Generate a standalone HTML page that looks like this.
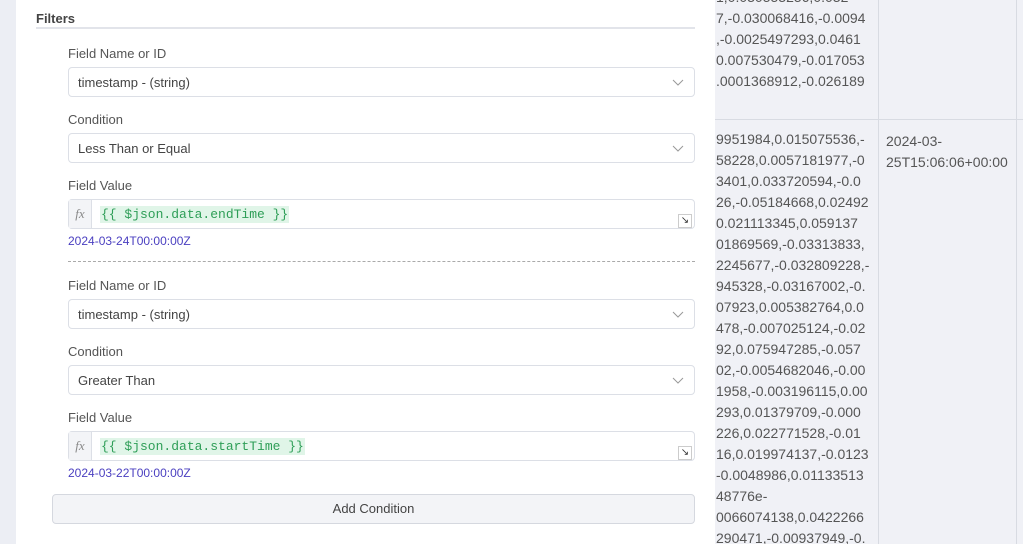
<!DOCTYPE html>
<html><head><meta charset="utf-8"><style>
*{box-sizing:border-box;margin:0;padding:0}
body{width:1023px;height:544px;overflow:hidden;background:#f0f1f6;font-family:"Liberation Sans",sans-serif;position:relative;color:#333}
.left{position:absolute;left:0;top:0;width:16px;height:544px;background:#eceef4}
.panel{position:absolute;left:16px;top:0;width:699px;height:544px;background:#fff}
.a{position:absolute}
.title{left:36px;top:11px;font-size:13px;font-weight:bold;color:#444}
.hr{left:36px;top:27px;width:659px;height:2px;background:#e2e4ea}
.lbl{left:68px;font-size:13px;color:#555}
.inp{left:68px;width:627px;height:30px;border:1px solid #dcdfe6;border-radius:4px;background:#fff;font-size:13px;color:#444;padding:7px 9px}
.chev{position:absolute;right:10px;top:8px}
.fx{left:68px;width:627px;height:30px;border:1px solid #dcdfe6;border-radius:4px;background:#fff}
.fx .f{position:absolute;left:0;top:0;width:23px;height:28px;background:#f3f4f7;border-right:1px solid #dcdfe6;font-family:"Liberation Serif",serif;font-style:italic;color:#888;font-size:13px;text-align:center;line-height:28px}
.fx .c{position:absolute;left:31px;top:6px;font-family:"Liberation Mono",monospace;font-size:13px;color:#2e9e57;background:#e0f5e8;padding:1px 1px}
.fx .r{position:absolute;right:2px;bottom:0;width:14px;height:14px;border:1px solid #ccc;background:#fff;font-size:10px;line-height:12px;text-align:center}
.hint{left:68px;font-size:12px;color:#4a3fc0}
.dash{left:68px;top:261px;width:627px;border-top:1px dashed #aaa}
.btn{left:52px;top:494px;width:643px;height:30px;border:1px solid #d5d8df;border-radius:4px;background:#f3f4f7;font-size:13px;text-align:center;line-height:28px;color:#444}
.tbl{position:absolute;left:716px;top:0;width:162px;height:544px;overflow:hidden}
.tbl div{position:absolute;left:0;white-space:nowrap;font-size:14px;color:#555}
.vl{position:absolute;top:0;width:1px;height:544px;background:#d8dbe2}
.hl{position:absolute;left:715px;width:308px;top:119px;height:1px;background:#d8dbe2}
</style></head><body>
<div class="left"></div>
<div class="tbl">
<div style="top:-11px">1,0.030553256,0.032</div>
<div style="top:10px">7,-0.030068416,-0.0094</div>
<div style="top:31px">,-0.0025497293,0.0461</div>
<div style="top:52px">0.007530479,-0.017053</div>
<div style="top:73px">.0001368912,-0.026189</div>
<div style="top:131px">9951984,0.015075536,-</div>
<div style="top:152px">58228,0.0057181977,-0</div>
<div style="top:173px">3401,0.033720594,-0.0</div>
<div style="top:194px">26,-0.05184668,0.02492</div>
<div style="top:215px">0.021113345,0.059137</div>
<div style="top:236px">01869569,-0.03313833,</div>
<div style="top:257px">2245677,-0.032809228,-</div>
<div style="top:278px">945328,-0.03167002,-0.</div>
<div style="top:299px">07923,0.005382764,0.0</div>
<div style="top:320px">478,-0.007025124,-0.02</div>
<div style="top:341px">92,0.075947285,-0.057</div>
<div style="top:362px">02,-0.0054682046,-0.00</div>
<div style="top:383px">1958,-0.003196115,0.00</div>
<div style="top:404px">293,0.01379709,-0.000</div>
<div style="top:425px">226,0.022771528,-0.01</div>
<div style="top:446px">16,0.019974137,-0.0123</div>
<div style="top:467px">-0.0048986,0.01133513</div>
<div style="top:488px">48776e-</div>
<div style="top:509px">0066074138,0.0422266</div>
<div style="top:530px">290471,-0.00937949,-0.</div>
</div>
<div class="vl" style="left:878px"></div>
<div class="vl" style="left:1016px"></div>
<div class="hl"></div>
<div class="a" style="left:886px;top:131px;font-size:14px;color:#555;line-height:21px">2024-03-<br>25T15:06:06+00:00</div>
<div class="panel"></div>
<div class="a title">Filters</div>
<div class="a hr"></div>

<div class="a lbl" style="top:46px">Field Name or ID</div>
<div class="a inp" style="top:67px">timestamp - (string)<svg class="chev" width="12" height="12" viewBox="0 0 12 12"><path d="M1 4l5 5 5-5" fill="none" stroke="#999" stroke-width="1"/></svg></div>
<div class="a lbl" style="top:112px">Condition</div>
<div class="a inp" style="top:133px">Less Than or Equal<svg class="chev" width="12" height="12" viewBox="0 0 12 12"><path d="M1 4l5 5 5-5" fill="none" stroke="#999" stroke-width="1"/></svg></div>
<div class="a lbl" style="top:178px">Field Value</div>
<div class="a fx" style="top:199px"><div class="f">fx</div><div class="c">{{ $json.data.endTime }}</div><div class="r">↘</div></div>
<div class="a hint" style="top:234px">2024-03-24T00:00:00Z</div>
<div class="a dash"></div>
<div class="a lbl" style="top:278px">Field Name or ID</div>
<div class="a inp" style="top:299px">timestamp - (string)<svg class="chev" width="12" height="12" viewBox="0 0 12 12"><path d="M1 4l5 5 5-5" fill="none" stroke="#999" stroke-width="1"/></svg></div>
<div class="a lbl" style="top:344px">Condition</div>
<div class="a inp" style="top:365px">Greater Than<svg class="chev" width="12" height="12" viewBox="0 0 12 12"><path d="M1 4l5 5 5-5" fill="none" stroke="#999" stroke-width="1"/></svg></div>
<div class="a lbl" style="top:410px">Field Value</div>
<div class="a fx" style="top:431px"><div class="f">fx</div><div class="c">{{ $json.data.startTime }}</div><div class="r">↘</div></div>
<div class="a hint" style="top:466px">2024-03-22T00:00:00Z</div>
<div class="a btn">Add Condition</div>
</body></html>
